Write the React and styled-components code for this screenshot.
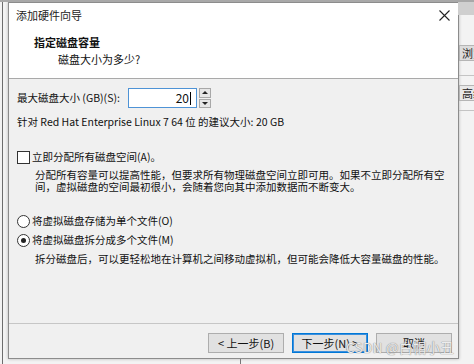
import React from "react";
import styled, { createGlobalStyle } from "styled-components";

const GlobalStyle = createGlobalStyle`
  html, body {
    margin: 0;
    padding: 0;
    background: #f0f0f0;
  }
  * {
    box-sizing: border-box;
  }
`;

const Desktop = styled.div`
  position: relative;
  width: 474px;
  height: 364px;
  overflow: hidden;
  background: #f3f3f3;
  border-top: 2px solid #a8a8a8;
  padding-left: 8px;
  font-family: "Noto Sans CJK SC", "Noto Sans", sans-serif;
  font-size: 11px;
  color: #111;
`;

/* bits of the window that sits behind the dialog */
const BackStrip = styled.div`
  position: absolute;
  left: 2px;
  top: 0;
  width: 1px;
  height: 364px;
  background: #6d6d6d;
`;

const BackTitle = styled.div`
  position: absolute;
  right: 0;
  top: 0;
  width: 16px;
  height: 13px;
  background: #cfcfcf;
`;

const BackButton = styled.div`
  position: absolute;
  right: 0;
  top: ${(p) => p.$top}px;
  width: 15px;
  height: 16px;
  background: ${(p) => p.$bg};
  border: 1px solid #b5b5b5;
  border-right: none;
  font-size: 11px;
  line-height: 14px;
  padding-left: 2px;
  overflow: hidden;
  white-space: nowrap;
  color: #222;
`;

const BackLine = styled.div`
  position: absolute;
  right: 0;
  top: ${(p) => p.$top}px;
  width: 15px;
  height: 1px;
  background: #c4c4c4;
`;

const BottomTick = styled.div`
  position: absolute;
  left: 240px;
  top: 357px;
  width: 1px;
  height: 7px;
  background: #777;
`;

const Dialog = styled.div`
  width: 451px;
  height: 357px;
  background: #f0f0f0;
  border: 1px solid #8c8c8c;
  box-shadow: 0 0 3px rgba(0, 0, 0, 0.25);
  display: flex;
  flex-direction: column;
`;

const Header = styled.div`
  background: #fff;
  height: 76px;
  border-bottom: 1px solid #a9a9a9;
`;

const TitleBar = styled.div`
  height: 24px;
  display: flex;
  align-items: center;
  justify-content: space-between;
  padding: 0 8px 0 7px;
`;

const TitleText = styled.span`
  font-size: 11px;
  color: #222;
`;

const Close = styled.svg`
  width: 11px;
  height: 11px;
`;

const Heading = styled.div`
  padding-left: 25px;
  margin-top: 8px;
  font-weight: 700;
  line-height: 15px;
`;

const SubHeading = styled.div`
  padding-left: 49px;
  margin-top: 2px;
  line-height: 15px;
`;

const Body = styled.div`
  flex: 1;
  padding: 9px 8px 0 8px;
  font-size: 10.5px;
`;

const Row = styled.div`
  display: flex;
  align-items: center;
  margin-top: ${(p) => p.$mt || 0}px;
  line-height: 14px;
  height: ${(p) => p.$h || 14}px;
  white-space: pre;
`;

const Label = styled.span`
  width: 111px;
`;

const NumInput = styled.div`
  width: 69px;
  height: 20px;
  border: 1px solid #4e93d6;
  background: #fff;
  display: flex;
  align-items: center;
  justify-content: flex-end;
  padding-right: 5px;
  font-size: 12px;
`;

const Caret = styled.span`
  width: 1px;
  height: 13px;
  background: #000;
  margin-left: 1px;
`;

const Spin = styled.div`
  margin-left: 2px;
  width: 12px;
  height: 20px;
  display: flex;
  flex-direction: column;
  gap: 1px;
`;

const SpinPart = styled.div`
  flex: 1;
  background: #e6e6e6;
  border: 1px solid #a8a8a8;
  display: flex;
  align-items: center;
  justify-content: center;
  &::after {
    content: "";
    border-left: 3px solid transparent;
    border-right: 3px solid transparent;
    ${(p) =>
      p.$up ? "border-bottom: 3px solid #222;" : "border-top: 3px solid #222;"}
  }
`;

const CheckBox = styled.span`
  width: 13px;
  height: 13px;
  border: 1px solid #333;
  background: #fff;
  margin-right: 2px;
`;

const Radio = styled.span`
  width: 13px;
  height: 13px;
  border-radius: 50%;
  border: 1px solid #333;
  background: #fff;
  margin-right: 2px;
  display: flex;
  align-items: center;
  justify-content: center;
  &::after {
    content: "";
    width: 5px;
    height: 5px;
    border-radius: 50%;
    background: ${(p) => (p.$checked ? "#222" : "transparent")};
  }
`;

const Para = styled.div`
  padding-left: 18px;
  line-height: 12px;
  margin-top: ${(p) => p.$mt}px;
  white-space: nowrap;
`;

const Footer = styled.div`
  height: 35px;
  border-top: 1px solid #c6c6c6;
  display: flex;
  justify-content: flex-end;
  align-items: flex-start;
  gap: 8px;
  padding: 9px 6px 0 0;
`;

const Button = styled.button`
  width: 76px;
  height: 20px;
  padding: 0;
  font-family: inherit;
  font-size: 11px;
  color: #111;
  background: #e1e1e1;
  border: 1px solid ${(p) => (p.$primary ? "#0078d7" : "#adadad")};
  box-shadow: ${(p) => (p.$primary ? "inset 0 0 0 1px #3c8fdc" : "none")};
`;

const Watermark = styled.div`
  position: absolute;
  left: 346px;
  top: 335px;
  font-size: 13.5px;
  letter-spacing: 0.3px;
  color: rgba(255, 255, 255, 0.85);
  text-shadow: 0 0 1px #8a8a8a, 0 0 1px #8a8a8a;
  white-space: nowrap;
`;

export default function App() {
  return (
    <>
      <GlobalStyle />
      <Desktop>
        <BackStrip />
        <BackTitle />
        <BackButton $top={43} $bg="#dcdcdc">浏览</BackButton>
        <BackLine $top={73} />
        <BackButton $top={83} $bg="#e8e8e8">高级</BackButton>
        <BackLine $top={108} />
        <BottomTick />
        <Dialog>
          <Header>
            <TitleBar>
              <TitleText>添加硬件向导</TitleText>
              <Close viewBox="0 0 11 11">
                <path d="M0.5 0.5L10.5 10.5M10.5 0.5L0.5 10.5" stroke="#222" strokeWidth="1.1" />
              </Close>
            </TitleBar>
            <Heading>指定磁盘容量</Heading>
            <SubHeading>磁盘大小为多少?</SubHeading>
          </Header>
          <Body>
            <Row $h={20}>
              <Label>最大磁盘大小 (GB)(S):</Label>
              <NumInput>
                20
                <Caret />
              </NumInput>
              <Spin>
                <SpinPart $up />
                <SpinPart />
              </Spin>
            </Row>
            <Row $mt={7}>针对 Red Hat Enterprise Linux 7 64 位 的建议大小: 20 GB</Row>
            <Row $mt={21}>
              <CheckBox />
              立即分配所有磁盘空间(A)。
            </Row>
            <Para $mt={5}>
              分配所有容量可以提高性能，但要求所有物理磁盘空间立即可用。如果不立即分配所有空
              <br />
              间，虚拟磁盘的空间最初很小，会随着您向其中添加数据而不断变大。
            </Para>
            <Row $mt={21}>
              <Radio />
              将虚拟磁盘存储为单个文件(O)
            </Row>
            <Row $mt={5}>
              <Radio $checked />
              将虚拟磁盘拆分成多个文件(M)
            </Row>
            <Para $mt={6}>
              拆分磁盘后，可以更轻松地在计算机之间移动虚拟机，但可能会降低大容量磁盘的性能。
            </Para>
          </Body>
          <Footer>
            <Button>&lt; 上一步(B)</Button>
            <Button $primary>下一步(N) &gt;</Button>
            <Button>取消</Button>
          </Footer>
        </Dialog>
        <Watermark>CSDN @白帽小丑</Watermark>
      </Desktop>
    </>
  );
}
